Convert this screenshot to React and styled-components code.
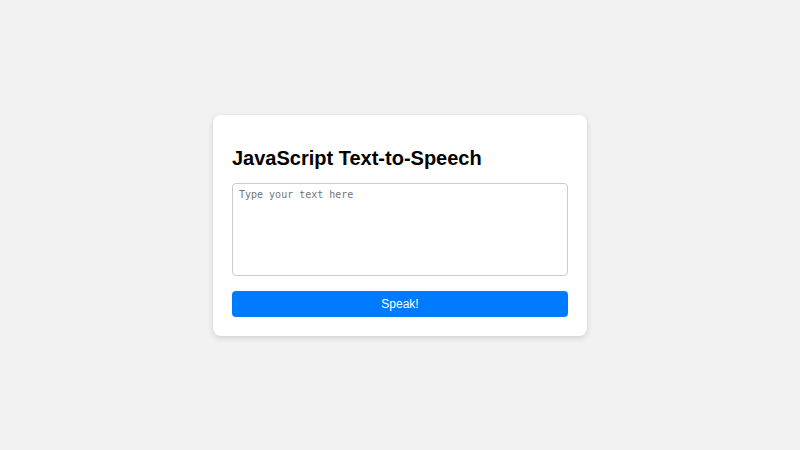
import React, { useState } from 'react';
import styled, { createGlobalStyle } from 'styled-components';

const GlobalStyle = createGlobalStyle`
    body {
        margin: 0;
        background-color: #f2f2f2;
        font-family: "Liberation Sans", Arial, sans-serif;
    }
`;

const Page = styled.div`
    display: flex;
    justify-content: center;
    align-items: center;
    height: 100vh;
`;

const Card = styled.div`
    width: 336px;
    padding: 20px 19px 19px;
    background-color: #fff;
    border-radius: 8px;
    box-shadow: 0 2px 6px rgba(0, 0, 0, 0.15);
`;

const Title = styled.h1`
    margin: 12px 0 13px;
    font-size: 20px;
    line-height: 23px;
    font-weight: 700;
    color: #000;
`;

const TextInput = styled.textarea`
    display: block;
    box-sizing: border-box;
    width: 100%;
    height: 93px;
    margin: 0 0 15px;
    padding: 5px 6px;
    border: 1px solid #ccc;
    border-radius: 4px;
    font-family: "DejaVu Sans Mono", monospace;
    font-size: 10px;
    resize: none;

    &::placeholder {
        color: #757575;
    }
`;

const SpeakButton = styled.button`
    display: block;
    width: 100%;
    height: 26px;
    padding: 0;
    border: none;
    border-radius: 4px;
    background-color: #007bff;
    color: #fff;
    font-family: "Liberation Sans", Arial, sans-serif;
    font-size: 12px;
    cursor: pointer;
`;

const App = () => {
    const [text, setText] = useState('');

    const speak = () => {
        if (!text || !window.speechSynthesis) return;
        window.speechSynthesis.speak(new SpeechSynthesisUtterance(text));
    };

    return (
        <Page>
            <GlobalStyle />
            <Card>
                <Title>JavaScript Text-to-Speech</Title>
                <TextInput
                    placeholder="Type your text here"
                    value={text}
                    onChange={(e) => setText(e.target.value)}
                />
                <SpeakButton onClick={speak}>Speak!</SpeakButton>
            </Card>
        </Page>
    );
};

export default App;
